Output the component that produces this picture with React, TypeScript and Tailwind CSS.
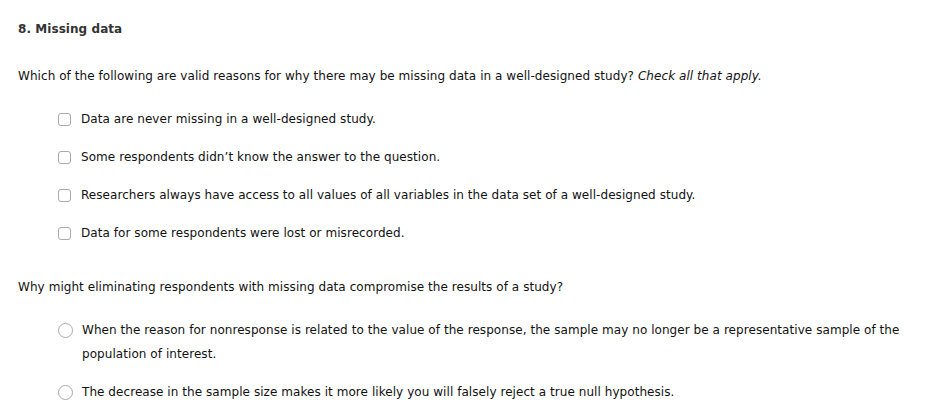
const checks = [
  'Data are never missing in a well-designed study.',
  'Some respondents didn\u2019t know the answer to the question.',
  'Researchers always have access to all values of all variables in the data set of a well-designed study.',
  'Data for some respondents were lost or misrecorded.',
]

const radios = [
  'When the reason for nonresponse is related to the value of the response, the sample may no longer be a representative sample of the population of interest.',
  'The decrease in the sample size makes it more likely you will falsely reject a true null hypothesis.',
]

function CheckBox() {
  return <span className="mt-[6px] w-[13px] h-[13px] shrink-0 rounded-[3px] border border-[#a9a9a9] bg-white" />
}

function Radio() {
  return <span className="mt-[5px] w-[15px] h-[15px] shrink-0 rounded-full border border-[#a9a9a9] bg-white" />
}

export default function App() {
  return (
    <div className="w-[946px] h-[415px] bg-white overflow-hidden text-[12px] leading-[24px] tracking-[0.06px] text-[#111]"
      style={{ fontFamily: '"DejaVu Sans", Verdana, sans-serif' }}>
      <div className="pl-[18px] pt-[17px]">
        <h2 className="font-bold text-[#333] text-[12px] leading-[24px]">8. Missing data</h2>

        <p className="mt-[23px]">
          Which of the following are valid reasons for why there may be missing data in a well-designed study? <i>Check all that apply.</i>
        </p>

        <div className="mt-[19px] pl-[40px] space-y-[14px]">
          {checks.map(c => (
            <label key={c} className="flex gap-[10px]">
              <CheckBox />
              <span>{c}</span>
            </label>
          ))}
        </div>

        <p className="mt-[30px]">Why might eliminating respondents with missing data compromise the results of a study?</p>

        <div className="mt-[19px] pl-[40px] space-y-[14px] w-[900px]">
          {radios.map(r => (
            <label key={r} className="flex gap-[9px]">
              <Radio />
              <span>{r}</span>
            </label>
          ))}
        </div>
      </div>
    </div>
  )
}
